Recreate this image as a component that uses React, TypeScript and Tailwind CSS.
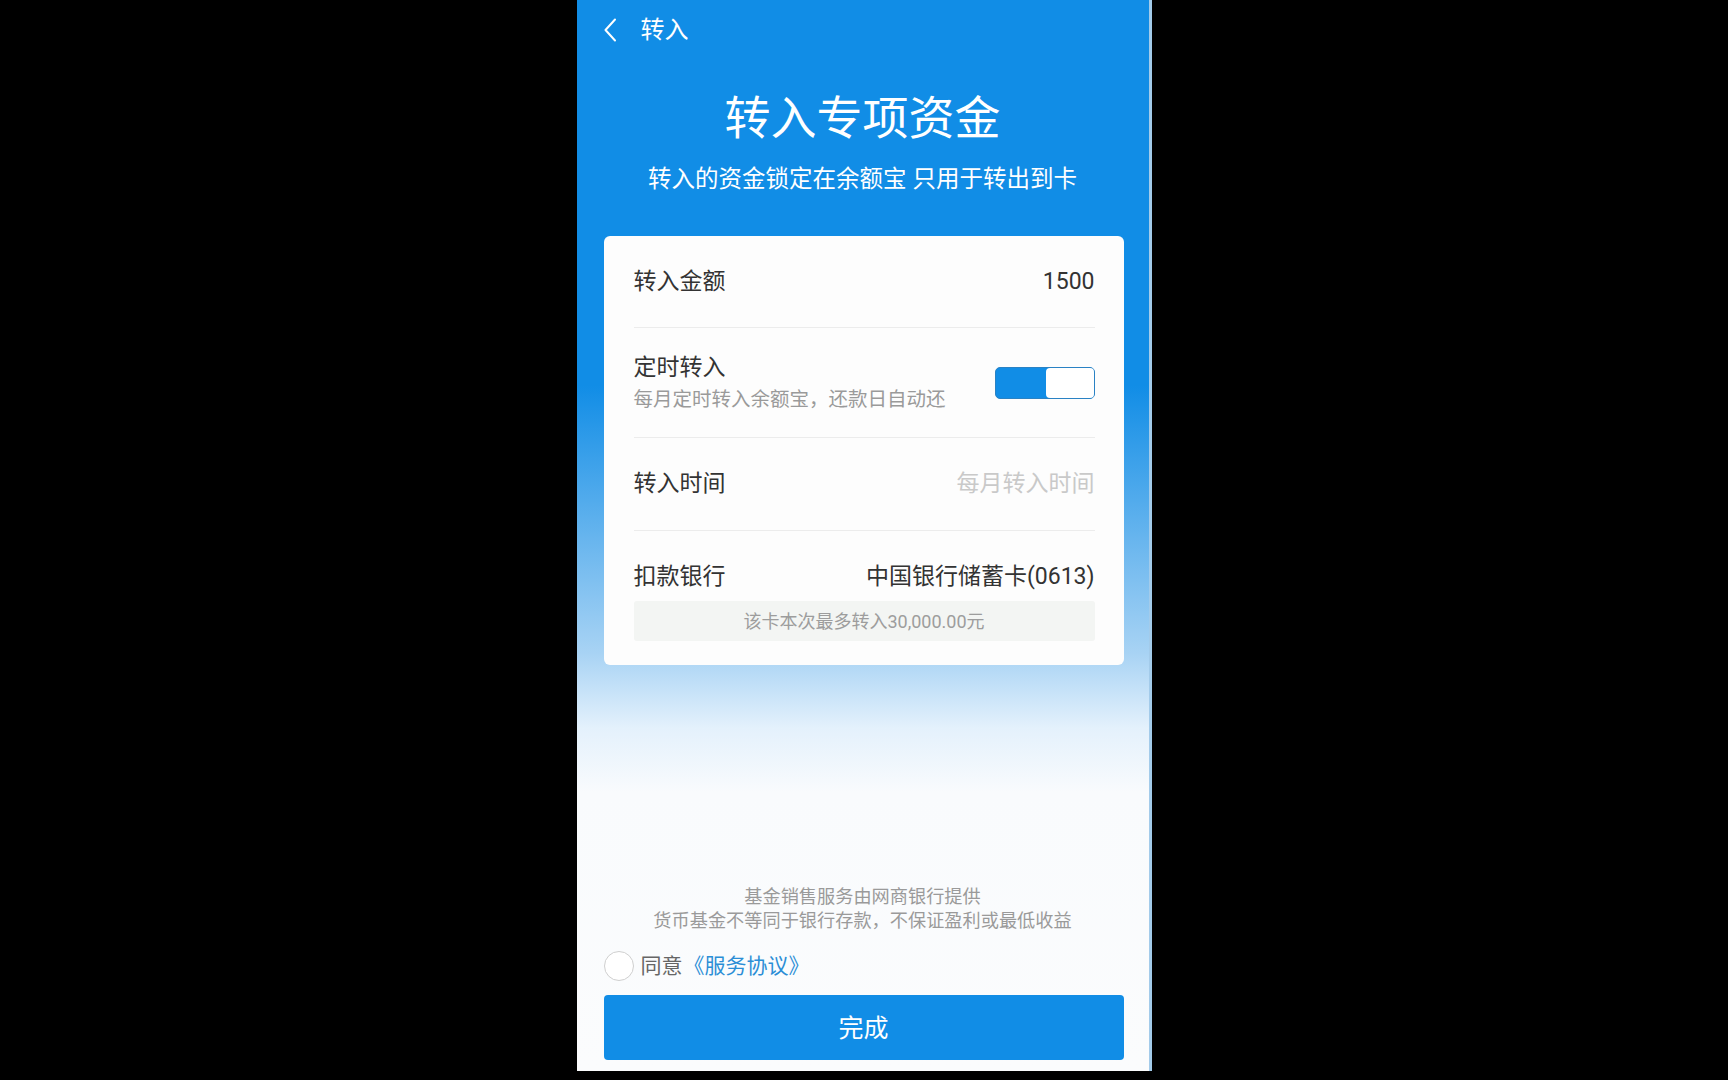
import React, { useState } from 'react';

const font = { fontFamily: 'Roboto, "Noto Sans CJK SC", sans-serif' };

function Row({ children, className = '' }: { children: React.ReactNode; className?: string }) {
  return <div className={`flex items-center justify-between border-b border-[#ececec] ${className}`}>{children}</div>;
}

export default function App() {
  const [scheduled, setScheduled] = useState(true);
  const [agreed, setAgreed] = useState(false);

  return (
    <div className="w-full h-[1080px] bg-black" style={font}>
      <div className="mx-auto w-[575px] h-[1071px] flex flex-col border-r-[3px] border-r-[#a3cbea] bg-[linear-gradient(180deg,#118de6_0%,#118de6_36%,#a8d3f4_61%,#e4f1fc_68%,#f9fbfd_74%,#fbfcfd_100%)]">
        {/* top bar */}
        <div className="h-[60px] flex items-center pl-[27px] shrink-0">
          <svg width="12" height="24" viewBox="0 0 12 24" fill="none">
            <path d="M11 1.5L1.5 12L11 22.5" stroke="white" strokeWidth="2" strokeLinecap="round" strokeLinejoin="round" />
          </svg>
          <span className="ml-[25px] text-[24px] leading-[30px] text-white">转入</span>
        </div>

        <h1 className="mt-[30px] text-center text-[46px] leading-[56px] text-white">转入专项资金</h1>
        <p className="mt-[17px] text-center text-[23.5px] leading-[32px] text-white">转入的资金锁定在余额宝 只用于转出到卡</p>

        {/* form card */}
        <div className="mt-[41px] ml-[27px] w-[520px] rounded-[6px] bg-[#fdfdfd] pl-[30px] pr-[29px]">
          <Row className="h-[92px] pt-[1px]">
            <span className="text-[23px] text-[#333]">转入金额</span>
            <span className="text-[23px] text-[#333]">1500</span>
          </Row>

          <Row className="h-[110px]">
            <div className="flex flex-col gap-[4px]">
              <span className="text-[23px] leading-[30px] text-[#333]">定时转入</span>
              <span className="text-[19.5px] leading-[26px] text-[#9a9a9a]">每月定时转入余额宝，还款日自动还</span>
            </div>
            <button
              onClick={() => setScheduled(!scheduled)}
              className={`relative w-[100px] h-[32px] rounded-[5px] border-[1.5px] border-[#2a82c4] ${scheduled ? 'bg-[#118de6]' : 'bg-white'}`}
            >
              <span
                className={`absolute top-0 h-full w-[48px] rounded-[4px] bg-white ${scheduled ? 'right-0' : 'left-0 border border-[#ddd]'}`}
              />
            </button>
          </Row>

          <Row className="h-[93px]">
            <span className="text-[23px] text-[#333]">转入时间</span>
            <span className="text-[23px] text-[#c9c9c9]">每月转入时间</span>
          </Row>

          <div className="pt-[31px] pb-[24px]">
            <div className="flex items-center justify-between leading-[30px]">
              <span className="text-[23px] text-[#333]">扣款银行</span>
              <span className="text-[23px] text-[#333]">中国银行储蓄卡(0613)</span>
            </div>
            <div className="mt-[9px] h-[40px] rounded-[3px] bg-[#f3f5f3] flex items-center justify-center text-[18px] text-[#9d9d9d]">
              该卡本次最多转入30,000.00元
            </div>
          </div>
        </div>

        {/* disclaimer, agreement, submit */}
        <div className="mt-auto px-[27px] pb-[11px]">
          <div className="text-center text-[18.2px] leading-[24px] text-[#9a9a9a]">
            <p>基金销售服务由网商银行提供</p>
            <p>货币基金不等同于银行存款，不保证盈利或最低收益</p>
          </div>
          <label className="mt-[18px] flex items-center gap-[7px] cursor-pointer select-none">
            <input type="checkbox" className="sr-only" checked={agreed} onChange={(e) => setAgreed(e.target.checked)} />
            <span className={`w-[30px] h-[30px] rounded-full border-[1.5px] ${agreed ? 'border-[#118de6] bg-[#118de6]' : 'border-[#cfcfcf] bg-white'}`} />
            <span className="text-[21px] leading-[30px] text-[#666]">同意</span>
            <span className="text-[21px] leading-[30px] text-[#2b8ed6] -ml-[6px]">《服务协议》</span>
          </label>
          <button className="mt-[14px] w-[520px] h-[65px] rounded-[4px] bg-[#118de6] text-white text-[25px] pt-[3px]">完成</button>
        </div>
      </div>
    </div>
  );
}
